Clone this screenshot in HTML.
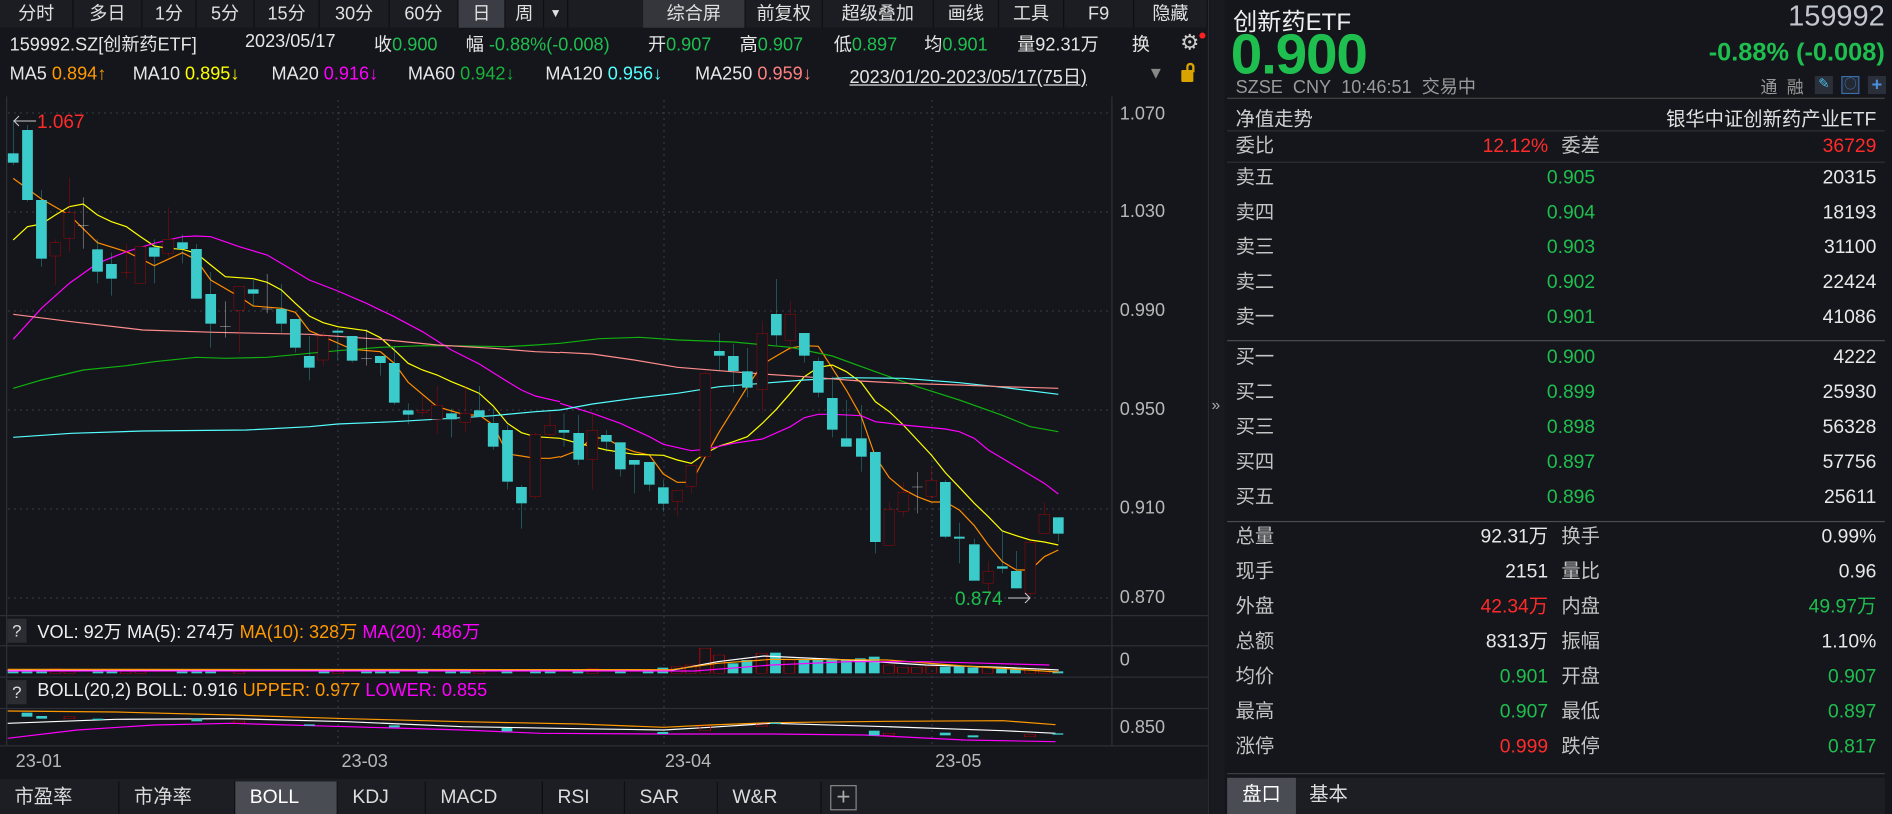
<!DOCTYPE html>
<html><head><meta charset="utf-8">
<style>
*{margin:0;padding:0;box-sizing:border-box}
html,body{width:1892px;height:814px;overflow:hidden;background:#14161b}
body{position:relative;font-family:"Liberation Sans","Noto Sans CJK SC",sans-serif;color:#d8d8d8}
#w{position:absolute;left:0;top:0;width:1568px;height:675px;transform:scale(1.20663,1.20593);transform-origin:0 0}
.a{position:absolute;white-space:nowrap}
.tb{position:absolute;top:0;height:23px;line-height:23px;text-align:center;font-size:15px;color:#e0e0e0;border-right:1px solid #0e0f12}
.g{color:#1fbf4f}.r{color:#ff2b2b}.o{color:#ff9900}.y{color:#ffff00}.m{color:#ff00ff}.c{color:#55ffff}.gg{color:#19b33a}.s{color:#ff8080}
.hl{position:absolute;height:1px;background:#2e3037}
.vl{position:absolute;width:1px;background:#2e3037}
.ax{position:absolute;left:928px;font-size:15px;color:#b8b8b8}
.bt{position:absolute;top:648px;height:27px;line-height:27px;font-size:16px;color:#dcdcdc;padding-left:12px;border-right:1px solid #0e0f12}
.rw{position:absolute;left:1015px;width:545px;height:29px;line-height:29px;font-size:16px}
.rw .l{position:absolute;left:9px;color:#c4c4c4}
.rw .v1{position:absolute;right:277px;text-align:right}
.rw .l2{position:absolute;left:279px;color:#c4c4c4}
.rw .p{position:absolute;right:238px;text-align:right}
.rw .v2{position:absolute;right:5px;text-align:right;color:#e8e8e8}
</style></head><body>
<div id="w">
<div class="a" style="left:0;top:0;width:1001px;height:23px;background:#1b1d22"></div>
<div class="tb" style="left:0;width:61px">分时</div>
<div class="tb" style="left:61px;width:57px">多日</div>
<div class="tb" style="left:118px;width:45px">1分</div>
<div class="tb" style="left:163px;width:48px">5分</div>
<div class="tb" style="left:211px;width:54px">15分</div>
<div class="tb" style="left:265px;width:58px">30分</div>
<div class="tb" style="left:323px;width:57px">60分</div>
<div class="tb" style="left:380px;width:39px;background:#3b3d44">日</div>
<div class="tb" style="left:419px;width:32px">周</div>
<div class="tb" style="left:451px;width:20px;font-size:10px">▼</div>
<div class="tb" style="left:533px;width:85px;background:#34363c">综合屏</div>
<div class="tb" style="left:618px;width:64px">前复权</div>
<div class="tb" style="left:682px;width:92px">超级叠加</div>
<div class="tb" style="left:774px;width:54px">画线</div>
<div class="tb" style="left:828px;width:54px">工具</div>
<div class="tb" style="left:882px;width:58px">F9</div>
<div class="tb" style="left:940px;width:61px">隐藏</div>
<div class="a" style="top:26px;font-size:15px;left:8px;color:#e6e6e6">159992.SZ[创新药ETF]</div>
<div class="a" style="top:26px;font-size:15px;left:203px;color:#e6e6e6">2023/05/17</div>
<div class="a" style="top:26px;font-size:15px;left:310px;color:#e6e6e6">收<span class="g">0.900</span></div>
<div class="a" style="top:26px;font-size:15px;left:386px;color:#e6e6e6">幅 <span class="g">-0.88%(-0.008)</span></div>
<div class="a" style="top:26px;font-size:15px;left:537px;color:#e6e6e6">开<span class="g">0.907</span></div>
<div class="a" style="top:26px;font-size:15px;left:613px;color:#e6e6e6">高<span class="g">0.907</span></div>
<div class="a" style="top:26px;font-size:15px;left:691px;color:#e6e6e6">低<span class="g">0.897</span></div>
<div class="a" style="top:26px;font-size:15px;left:766px;color:#e6e6e6">均<span class="g">0.901</span></div>
<div class="a" style="top:26px;font-size:15px;left:843px;color:#e6e6e6">量92.31万</div>
<div class="a" style="top:26px;font-size:15px;left:938px;color:#e6e6e6">换</div>
<div class="a" style="top:25px;font-size:18px;left:978px;color:#ccc">⚙</div>
<div class="a" style="top:27px;left:994px;width:5px;height:5px;border-radius:3px;background:#ff2020"></div>
<div class="a" style="top:53px;font-size:15px;left:8px;color:#e6e6e6">MA5 <span class="o">0.894↑</span></div>
<div class="a" style="top:53px;font-size:15px;left:110px;color:#e6e6e6">MA10 <span class="y">0.895↓</span></div>
<div class="a" style="top:53px;font-size:15px;left:225px;color:#e6e6e6">MA20 <span class="m">0.916↓</span></div>
<div class="a" style="top:53px;font-size:15px;left:338px;color:#e6e6e6">MA60 <span class="gg">0.942↓</span></div>
<div class="a" style="top:53px;font-size:15px;left:452px;color:#e6e6e6">MA120 <span class="c">0.956↓</span></div>
<div class="a" style="top:53px;font-size:15px;left:576px;color:#e6e6e6">MA250 <span class="s">0.959↓</span></div>
<div class="a" style="top:53px;font-size:15px;left:704px;color:#e6e6e6;text-decoration:underline">2023/01/20-2023/05/17(75日)</div>
<div class="a" style="top:52px;font-size:14px;left:951px;color:#888">▼</div>
<div class="a" style="top:58px;left:979px;width:10px;height:10px;background:#d9a400;border-radius:1px"></div>
<div class="a" style="top:52px;left:983px;width:7px;height:8px;border:2px solid #d9a400;border-bottom:none;border-radius:4px 4px 0 0"></div>
<div class="vl" style="left:5px;top:80px;height:538px"></div>
<div class="vl" style="left:921px;top:80px;height:538px"></div>
<div class="vl" style="left:1001px;top:0;height:675px;background:#2a2c32"></div>
<div class="hl" style="left:0;top:510px;width:1001px"></div>
<div class="hl" style="left:0;top:535px;width:1001px"></div>
<div class="hl" style="left:0;top:561px;width:1001px"></div>
<div class="hl" style="left:0;top:587px;width:1001px"></div>
<div class="hl" style="left:0;top:618px;width:1001px"></div>
<div class="ax" style="top:86px">1.070</div>
<div class="ax" style="top:167px">1.030</div>
<div class="ax" style="top:249px">0.990</div>
<div class="ax" style="top:331px">0.950</div>
<div class="ax" style="top:413px">0.910</div>
<div class="ax" style="top:487px">0.870</div>
<div class="ax" style="top:539px">0</div>
<div class="ax" style="top:595px">0.850</div>
<div class="a" style="left:6px;top:513px;width:16px;height:20px;background:#2b2d33;font-size:14px;line-height:20px;text-align:center;color:#ddd">?</div>
<div class="a" style="left:31px;top:513px;font-size:15px;color:#eee">VOL: 92万 MA(5): 274万 <span class="o">MA(10): 328万</span> <span class="m">MA(20): 486万</span></div>
<div class="a" style="left:6px;top:564px;width:16px;height:20px;background:#2b2d33;font-size:14px;line-height:20px;text-align:center;color:#ddd">?</div>
<div class="a" style="left:31px;top:564px;font-size:15px;color:#eee">BOLL(20,2) BOLL: 0.916 <span class="o">UPPER: 0.977</span> <span class="m">LOWER: 0.855</span></div>
<div class="a" style="left:13px;top:623px;font-size:15px;color:#b8b8b8">23-01</div>
<div class="a" style="left:283px;top:623px;font-size:15px;color:#b8b8b8">23-03</div>
<div class="a" style="left:551px;top:623px;font-size:15px;color:#b8b8b8">23-04</div>
<div class="a" style="left:775px;top:623px;font-size:15px;color:#b8b8b8">23-05</div>
<div class="a" style="left:0;top:646px;width:1001px;height:29px;background:#1c1e23"></div>
<div class="bt" style="left:0;width:99px">市盈率</div>
<div class="bt" style="left:99px;width:96px">市净率</div>
<div class="bt" style="left:195px;width:85px;background:#4a4c54;color:#fff">BOLL</div>
<div class="bt" style="left:280px;width:73px">KDJ</div>
<div class="bt" style="left:353px;width:97px">MACD</div>
<div class="bt" style="left:450px;width:68px">RSI</div>
<div class="bt" style="left:518px;width:77px">SAR</div>
<div class="bt" style="left:595px;width:86px">W&amp;R</div>
<div class="a" style="left:688px;top:651px;width:22px;height:21px;border:1px solid #888;color:#aaa;text-align:center;line-height:18px;font-size:20px">+</div>

<div class="a" style="left:1003px;top:0;width:12px;height:675px;background:#181a1f"></div>
<div class="a" style="left:1004px;top:328px;font-size:13px;color:#aaa">»</div>
<div class="a" style="left:1022px;top:2px;font-size:20px;color:#eee">创新药ETF</div>
<div class="a" style="right:6px;top:0px;font-size:24px;color:#c2c6ce">159992</div>
<div class="a g" style="left:1020px;top:17px;font-size:47px;font-weight:bold;letter-spacing:-1px">0.900</div>
<div class="a g" style="right:6px;top:32px;font-size:21px;font-weight:bold">-0.88% (-0.008)</div>
<div class="a" style="left:1024px;top:61px;font-size:15px;color:#9a9a9a">SZSE&nbsp; CNY&nbsp; 10:46:51&nbsp; 交易中</div>
<div class="a" style="left:1459px;top:62px;font-size:14px;color:#9a9a9a">通&nbsp; 融</div>
<div class="a" style="left:1504px;top:63px;width:15px;height:15px;background:#2a2f3a;color:#4bc0e8;font-size:11px;text-align:center;line-height:15px">✎</div>
<div class="a" style="left:1526px;top:63px;width:15px;height:15px;background:#232833;border:1px solid #3b6ea8;color:#4b8fe0;font-size:10px;text-align:center;line-height:13px">◯</div>
<div class="a" style="left:1548px;top:63px;width:15px;height:15px;background:#2a2f3a;color:#4b8fe0;font-size:15px;font-weight:bold;text-align:center;line-height:15px">+</div>
<div class="hl" style="left:1017px;top:81px;width:545px;background:#444"></div>
<div class="a" style="left:1024px;top:85px;font-size:16px;color:#d0d0d0">净值走势</div>
<div class="a" style="right:13px;top:85px;font-size:16px;color:#e0e0e0">银华中证创新药产业ETF</div>
<div class="hl" style="left:1017px;top:108px;width:545px"></div>
<div class="rw" style="top:107px"><span class="l">委比</span><span class="v1 r">12.12%</span><span class="l2">委差</span><span class="v2" style="color:#ff2b2b">36729</span></div>
<div class="hl" style="left:1017px;top:134px;width:545px"></div>
<div class="rw" style="top:133px"><span class="l">卖五</span><span class="p g">0.905</span><span class="v2">20315</span></div>
<div class="rw" style="top:162px"><span class="l">卖四</span><span class="p g">0.904</span><span class="v2">18193</span></div>
<div class="rw" style="top:191px"><span class="l">卖三</span><span class="p g">0.903</span><span class="v2">31100</span></div>
<div class="rw" style="top:220px"><span class="l">卖二</span><span class="p g">0.902</span><span class="v2">22424</span></div>
<div class="rw" style="top:249px"><span class="l">卖一</span><span class="p g">0.901</span><span class="v2">41086</span></div>
<div class="hl" style="left:1017px;top:282px;width:545px;background:#4a4c52"></div>
<div class="rw" style="top:282px"><span class="l">买一</span><span class="p g">0.900</span><span class="v2">4222</span></div>
<div class="rw" style="top:311px"><span class="l">买二</span><span class="p g">0.899</span><span class="v2">25930</span></div>
<div class="rw" style="top:340px"><span class="l">买三</span><span class="p g">0.898</span><span class="v2">56328</span></div>
<div class="rw" style="top:369px"><span class="l">买四</span><span class="p g">0.897</span><span class="v2">57756</span></div>
<div class="rw" style="top:398px"><span class="l">买五</span><span class="p g">0.896</span><span class="v2">25611</span></div>
<div class="hl" style="left:1017px;top:432px;width:545px;background:#4a4c52"></div>
<div class="rw" style="top:431px"><span class="l">总量</span><span class="v1" style="color:#e8e8e8">92.31万</span><span class="l2">换手</span><span class="v2">0.99%</span></div>
<div class="rw" style="top:460px"><span class="l">现手</span><span class="v1" style="color:#e8e8e8">2151</span><span class="l2">量比</span><span class="v2">0.96</span></div>
<div class="rw" style="top:489px"><span class="l">外盘</span><span class="v1 r">42.34万</span><span class="l2">内盘</span><span class="v2" style="color:#1fbf4f">49.97万</span></div>
<div class="rw" style="top:518px"><span class="l">总额</span><span class="v1" style="color:#e8e8e8">8313万</span><span class="l2">振幅</span><span class="v2">1.10%</span></div>
<div class="rw" style="top:547px"><span class="l">均价</span><span class="v1 g">0.901</span><span class="l2">开盘</span><span class="v2" style="color:#1fbf4f">0.907</span></div>
<div class="rw" style="top:576px"><span class="l">最高</span><span class="v1 g">0.907</span><span class="l2">最低</span><span class="v2" style="color:#1fbf4f">0.897</span></div>
<div class="rw" style="top:605px"><span class="l">涨停</span><span class="v1 r">0.999</span><span class="l2">跌停</span><span class="v2" style="color:#1fbf4f">0.817</span></div>
<div class="hl" style="left:1017px;top:641px;width:545px;background:#3a3c42"></div>
<div class="a" style="left:1017px;top:645px;width:545px;height:30px;background:#1c1e23"></div>
<div class="a" style="left:1017px;top:645px;width:57px;height:30px;background:#4a4c54;color:#fff;font-size:16px;line-height:30px;text-align:center">盘口</div>
<div class="a" style="left:1085px;top:645px;font-size:16px;line-height:30px;color:#ddd">基本</div>
</div>

<svg style="position:absolute;left:0;top:0" width="1892" height="814" viewBox="0 0 1892 814">
<style>
.gr{stroke:#3a3d44;stroke-width:1;stroke-dasharray:2 4}
.w{stroke-width:1;vector-effect:non-scaling-stroke}
.tw{stroke:#3bcbcb}
.rr{stroke:#dd0000}
.wt{stroke:#ffffff}
.t{fill:#3bcbcb}
.rb{fill:#14161b;stroke:#dd0000;stroke-width:1;vector-effect:non-scaling-stroke}
.rv{fill:none;stroke:#dd0000;stroke-width:1;vector-effect:non-scaling-stroke}
.ln{fill:none;stroke-width:1.2;vector-effect:non-scaling-stroke}
</style>
<g class="gr">
<line x1="8" y1="113" x2="1110" y2="113"/><line x1="8" y1="212" x2="1110" y2="212"/>
<line x1="8" y1="311" x2="1110" y2="311"/><line x1="8" y1="410" x2="1110" y2="410"/>
<line x1="8" y1="509" x2="1110" y2="509"/><line x1="8" y1="598" x2="1110" y2="598"/>
<line x1="338" y1="100" x2="338" y2="745"/><line x1="664" y1="100" x2="664" y2="745"/><line x1="932" y1="100" x2="932" y2="745"/>
</g>
<g transform="translate(0,100) scale(0.35714,0.33333)">
<polyline class="ln" stroke="#ff8c00" points="37,235 116,297 194,345 273,428 354,455 432,497 511,458 550,480 590,540 670,590 709,618 788,625 827,637 866,692 905,710 986,748 1065,755 1104,790 1143,847 1224,920 1303,945 1342,945 1381,975 1421,1062 1460,1068 1499,1075 1540,1075 1568,1070"/>
<polyline class="ln" stroke="#ffff00" points="37,420 77,380 116,372 155,345 194,320 233,312 273,345 312,365 354,380 393,410 432,438 471,445 511,448 550,460 590,495 631,530 709,536 748,547 788,570 827,610 866,648 905,668 946,680 1026,692 1065,713 1104,750 1143,790 1183,810 1224,825 1264,845 1303,862 1342,880 1381,918 1421,970 1460,998 1499,1010 1568,1015"/>
<polyline class="ln" stroke="#ff00ff" points="37,718 116,625 194,550 273,490 354,455 432,430 511,410 550,408 590,410 670,440 748,465 827,515 866,540 946,573 1026,610 1104,650 1183,695 1264,750 1342,792 1421,845 1460,870 1499,888 1568,905"/>
<polyline class="ln" stroke="#10b010" points="37,865 116,840 233,810 354,797 432,785 550,772 631,775 748,772 866,760 946,752 1065,742 1183,737 1303,738 1421,740 1499,735 1568,730"/>
<polyline class="ln" stroke="#55ffff" points="37,1012 200,1000 400,993 690,990 866,980 946,972 1104,965 1264,955 1381,947 1499,935 1568,930"/>
<polyline class="ln" stroke="#ff8c8c" points="37,643 200,665 400,690 600,697 866,703 1065,718 1224,735 1381,745 1499,755 1568,758"/>
</g>
<g transform="translate(560,250) scale(0.33333)">
<polyline class="ln" stroke="#ff8c00" points="0,622 56,600 97,563 139,565 181,590 223,605 268,615 310,672 352,697 394,697 436,620 478,545 520,478 562,410 607,343 649,318 691,294 733,287 775,289 817,355 859,420 904,500 946,620 988,683 1030,718 1072,740 1114,756 1156,756 1198,780 1243,827 1285,885 1327,935 1369,960 1411,960 1453,920 1495,900"/>
<polyline class="ln" stroke="#ffff00" points="0,565 56,580 139,600 223,613 310,616 352,630 394,640 436,610 478,588 520,575 562,560 607,520 649,478 691,430 733,380 775,352 817,345 859,365 904,398 946,455 988,485 1030,525 1072,570 1114,615 1156,668 1198,712 1243,760 1285,800 1327,843 1369,857 1411,870 1453,876 1495,885"/>
<polyline class="ln" stroke="#ff00ff" points="0,460 97,490 181,520 268,560 310,583 394,602 436,598 520,580 607,567 691,530 733,503 775,493 817,493 904,497 946,515 1030,525 1156,537 1198,545 1243,565 1285,600 1369,650 1453,700 1495,732"/>
<polyline class="ln" stroke="#10b010" points="0,280 118,266 238,262 355,270 520,276 691,292 817,318 946,365 1072,410 1198,450 1327,496 1411,530 1495,545"/>
<polyline class="ln" stroke="#55ffff" points="0,480 97,462 223,445 352,430 478,410 607,400 733,390 859,383 1030,385 1198,398 1327,412 1495,433"/>
<polyline class="ln" stroke="#ff8c8c" points="0,307 97,312 223,330 352,352 478,362 607,372 733,380 900,393 1030,400 1198,405 1327,410 1495,415"/>
</g>
<g transform="translate(0,100) scale(0.35714,0.33333)">
<g class="w tw">
<line x1="37" y1="60" x2="37" y2="195"/><line x1="77" y1="75" x2="77" y2="305"/><line x1="116" y1="270" x2="116" y2="500"/>
<line x1="273" y1="418" x2="273" y2="550"/><line x1="312" y1="458" x2="312" y2="587"/><line x1="432" y1="418" x2="432" y2="550"/>
<line x1="511" y1="403" x2="511" y2="490"/><line x1="550" y1="432" x2="550" y2="596"/><line x1="590" y1="516" x2="590" y2="743"/>
<line x1="709" y1="540" x2="709" y2="617"/><line x1="788" y1="552" x2="788" y2="698"/><line x1="827" y1="657" x2="827" y2="758"/>
<line x1="866" y1="708" x2="866" y2="841"/><line x1="946" y1="688" x2="946" y2="782"/><line x1="986" y1="708" x2="986" y2="788"/>
<line x1="1065" y1="768" x2="1065" y2="827"/><line x1="1104" y1="738" x2="1104" y2="914"/><line x1="1143" y1="910" x2="1143" y2="973"/>
<line x1="1264" y1="926" x2="1264" y2="1012"/><line x1="1342" y1="858" x2="1342" y2="951"/><line x1="1381" y1="925" x2="1381" y2="1049"/>
<line x1="1421" y1="975" x2="1421" y2="1168"/><line x1="1460" y1="1155" x2="1460" y2="1286"/>
</g>
<g class="w rr">
<line x1="155" y1="418" x2="155" y2="556"/><line x1="194" y1="232" x2="194" y2="455"/><line x1="354" y1="432" x2="354" y2="536"/>
<line x1="339" y1="518" x2="369" y2="518"/><line x1="393" y1="440" x2="393" y2="550"/><line x1="471" y1="322" x2="471" y2="470"/>
<line x1="670" y1="559" x2="670" y2="758"/><line x1="905" y1="694" x2="905" y2="797"/><line x1="1183" y1="886" x2="1183" y2="950"/>
<line x1="1224" y1="858" x2="1224" y2="1003"/><line x1="1303" y1="858" x2="1303" y2="997"/><line x1="1499" y1="998" x2="1499" y2="1196"/>
<line x1="1540" y1="940" x2="1540" y2="1018"/>
</g>
<g class="w wt">
<line x1="233" y1="292" x2="233" y2="446"/><line x1="218" y1="376" x2="248" y2="376"/>
<line x1="631" y1="604" x2="631" y2="713"/><line x1="616" y1="679" x2="646" y2="679"/>
<line x1="748" y1="522" x2="748" y2="640"/><line x1="733" y1="627" x2="763" y2="627"/>
<line x1="1026" y1="688" x2="1026" y2="797"/><line x1="1011" y1="775" x2="1041" y2="775"/>
</g>
<g class="t">
<rect x="22" y="160" width="30" height="28"/><rect x="62" y="90" width="30" height="210"/><rect x="101" y="300" width="30" height="176"/>
<rect x="258" y="448" width="30" height="67"/><rect x="297" y="492" width="30" height="44"/><rect x="417" y="442" width="30" height="28"/>
<rect x="496" y="427" width="30" height="20"/><rect x="535" y="447" width="30" height="149"/><rect x="575" y="582" width="30" height="89"/>
<rect x="694" y="568" width="30" height="13"/><rect x="773" y="627" width="30" height="44"/><rect x="812" y="657" width="30" height="86"/>
<rect x="851" y="768" width="30" height="35"/><rect x="931" y="692" width="30" height="6"/><rect x="971" y="708" width="30" height="74"/>
<rect x="1050" y="768" width="30" height="21"/><rect x="1089" y="789" width="30" height="119"/><rect x="1128" y="931" width="30" height="13"/>
<rect x="1249" y="940" width="30" height="18"/><rect x="1327" y="931" width="30" height="20"/><rect x="1366" y="969" width="30" height="71"/>
<rect x="1406" y="990" width="30" height="155"/><rect x="1445" y="1161" width="30" height="49"/>
</g>
<g class="rb">
<rect x="140" y="428" width="30" height="40"/><rect x="179" y="338" width="30" height="77"/><rect x="378" y="440" width="30" height="110"/>
<rect x="456" y="418" width="30" height="42"/><rect x="655" y="559" width="30" height="72"/><rect x="890" y="708" width="30" height="72"/>
<rect x="1168" y="931" width="30" height="6"/><rect x="1209" y="916" width="30" height="42"/><rect x="1288" y="940" width="30" height="27"/>
<rect x="1484" y="1003" width="30" height="187"/><rect x="1525" y="976" width="30" height="27"/>
</g>
</g>
<g transform="translate(560,250) scale(0.33333)">
<g class="w tw">
<line x1="12" y1="490" x2="12" y2="590"/><line x1="56" y1="495" x2="56" y2="645"/><line x1="139" y1="540" x2="139" y2="605"/>
<line x1="181" y1="577" x2="181" y2="680"/><line x1="223" y1="630" x2="223" y2="730"/><line x1="268" y1="636" x2="268" y2="724"/>
<line x1="310" y1="690" x2="310" y2="785"/><line x1="478" y1="249" x2="478" y2="362"/><line x1="520" y1="282" x2="520" y2="428"/>
<line x1="562" y1="294" x2="562" y2="442"/><line x1="649" y1="87" x2="649" y2="286"/><line x1="733" y1="249" x2="733" y2="338"/>
<line x1="775" y1="323" x2="775" y2="442"/><line x1="817" y1="380" x2="817" y2="562"/><line x1="859" y1="450" x2="859" y2="590"/>
<line x1="904" y1="465" x2="904" y2="665"/><line x1="946" y1="606" x2="946" y2="910"/><line x1="1156" y1="690" x2="1156" y2="866"/>
<line x1="1198" y1="818" x2="1198" y2="940"/><line x1="1243" y1="866" x2="1243" y2="992"/><line x1="1327" y1="840" x2="1327" y2="970"/>
<line x1="1369" y1="903" x2="1369" y2="1015"/><line x1="1495" y1="802" x2="1495" y2="875"/>
</g>
<g class="w rr">
<line x1="97" y1="492" x2="97" y2="718"/><line x1="352" y1="721" x2="352" y2="800"/><line x1="394" y1="646" x2="394" y2="730"/>
<line x1="436" y1="365" x2="436" y2="620"/><line x1="607" y1="213" x2="607" y2="488"/><line x1="691" y1="153" x2="691" y2="306"/>
<line x1="988" y1="755" x2="988" y2="886"/><line x1="1030" y1="697" x2="1030" y2="800"/><line x1="1114" y1="651" x2="1114" y2="745"/>
<line x1="1285" y1="933" x2="1285" y2="1030"/><line x1="1411" y1="871" x2="1411" y2="1040"/><line x1="1453" y1="757" x2="1453" y2="850"/>
</g>
<g class="w wt"><line x1="1072" y1="666" x2="1072" y2="790"/><line x1="1056" y1="711" x2="1088" y2="711"/></g>
<g class="t">
<rect x="-4" y="540" width="32" height="8"/><rect x="40" y="549" width="32" height="80"/><rect x="123" y="555" width="32" height="20"/>
<rect x="165" y="577" width="32" height="81"/><rect x="207" y="630" width="32" height="14"/><rect x="252" y="636" width="32" height="68"/>
<rect x="294" y="712" width="32" height="49"/><rect x="462" y="303" width="32" height="14"/><rect x="504" y="318" width="32" height="45"/>
<rect x="546" y="364" width="32" height="49"/><rect x="633" y="192" width="32" height="64"/><rect x="717" y="249" width="32" height="68"/>
<rect x="759" y="333" width="32" height="95"/><rect x="801" y="444" width="32" height="95"/><rect x="843" y="565" width="32" height="25"/>
<rect x="888" y="565" width="32" height="55"/><rect x="930" y="606" width="32" height="270"/><rect x="1140" y="696" width="32" height="164"/>
<rect x="1182" y="860" width="32" height="6"/><rect x="1227" y="883" width="32" height="109"/><rect x="1311" y="949" width="32" height="7"/>
<rect x="1353" y="963" width="32" height="52"/><rect x="1479" y="802" width="32" height="49"/>
</g>
<g class="rb">
<rect x="81" y="541" width="32" height="87"/><rect x="336" y="721" width="32" height="33"/><rect x="378" y="646" width="32" height="63"/>
<rect x="420" y="370" width="32" height="250"/><rect x="591" y="250" width="32" height="168"/><rect x="675" y="193" width="32" height="78"/>
<rect x="972" y="778" width="32" height="108"/><rect x="1014" y="727" width="32" height="57"/><rect x="1098" y="691" width="32" height="48"/>
<rect x="1269" y="965" width="32" height="35"/><rect x="1395" y="877" width="32" height="153"/><rect x="1437" y="793" width="32" height="57"/>
</g>
</g>
<line x1="14" y1="121" x2="36" y2="121" stroke="#ccc" stroke-width="1"/>
<polyline points="19,116 14,121 19,126" fill="none" stroke="#ccc" stroke-width="1"/>
<text x="37" y="128" font-family="Liberation Sans,sans-serif" font-size="19" fill="#ff2b2b">1.067</text>
<text x="955" y="605" font-family="Liberation Sans,sans-serif" font-size="19" fill="#1fbf4f">0.874</text>
<line x1="1008" y1="598" x2="1030" y2="598" stroke="#ccc" stroke-width="1"/>
<polyline points="1025,593 1030,598 1025,603" fill="none" stroke="#ccc" stroke-width="1"/>
<g transform="translate(0,610) scale(0.7716,0.33333)">
<g class="t">
<rect x="10" y="180" width="14" height="10"/><rect x="28" y="178" width="14" height="12"/><rect x="47" y="180" width="14" height="10"/>
<rect x="120" y="181" width="14" height="9"/><rect x="138" y="180" width="14" height="10"/><rect x="229" y="181" width="14" height="9"/>
<rect x="248" y="178" width="14" height="12"/><rect x="266" y="180" width="14" height="10"/><rect x="413" y="181" width="14" height="9"/>
<rect x="468" y="182" width="14" height="8"/><rect x="486" y="182" width="14" height="8"/><rect x="504" y="181" width="14" height="9"/>
<rect x="541" y="182" width="14" height="8"/><rect x="577" y="182" width="14" height="8"/><rect x="596" y="182" width="14" height="8"/>
<rect x="650" y="178" width="14" height="12"/><rect x="687" y="181" width="14" height="9"/><rect x="706" y="182" width="14" height="8"/>
<rect x="742" y="181" width="14" height="9"/><rect x="797" y="181" width="14" height="9"/><rect x="833" y="178" width="14" height="12"/>
<rect x="852" y="173" width="14" height="17"/><rect x="943" y="160" width="14" height="30"/><rect x="961" y="150" width="14" height="40"/>
<rect x="998" y="128" width="14" height="62"/><rect x="1035" y="150" width="14" height="40"/><rect x="1053" y="150" width="14" height="40"/>
<rect x="1071" y="150" width="14" height="40"/><rect x="1090" y="150" width="14" height="40"/><rect x="1108" y="145" width="14" height="45"/>
<rect x="1126" y="140" width="14" height="50"/><rect x="1218" y="170" width="14" height="20"/><rect x="1236" y="170" width="14" height="20"/>
<rect x="1254" y="172" width="14" height="18"/><rect x="1291" y="176" width="14" height="14"/><rect x="1309" y="176" width="14" height="14"/>
<rect x="1364" y="184" width="14" height="6"/>
</g>
<g class="rv">
<rect x="65" y="176" width="14" height="14"/><rect x="83" y="179" width="14" height="11"/><rect x="156" y="181" width="14" height="9"/>
<rect x="175" y="181" width="14" height="9"/><rect x="303" y="178" width="14" height="12"/><rect x="431" y="178" width="14" height="12"/>
<rect x="614" y="181" width="14" height="9"/><rect x="761" y="176" width="14" height="14"/><rect x="870" y="170" width="14" height="20"/>
<rect x="888" y="165" width="14" height="25"/><rect x="907" y="115" width="14" height="75"/><rect x="925" y="135" width="14" height="55"/>
<rect x="980" y="130" width="14" height="60"/><rect x="1016" y="150" width="14" height="40"/><rect x="1145" y="165" width="14" height="25"/>
<rect x="1163" y="172" width="14" height="18"/><rect x="1181" y="172" width="14" height="18"/><rect x="1200" y="170" width="14" height="20"/>
<rect x="1273" y="172" width="14" height="18"/><rect x="1328" y="176" width="14" height="14"/><rect x="1346" y="176" width="14" height="14"/>
</g>
<polyline class="ln" stroke="#ffffff" points="10,181 870,181 930,155 990,138 1100,150 1200,165 1300,172 1372,180"/>
<polyline class="ln" stroke="#ff9900" points="10,178 870,179 930,160 1000,148 1150,150 1250,168 1372,186"/>
<polyline class="ln" stroke="#ff00ff" points="10,183 900,183 1000,165 1100,155 1200,155 1280,160 1360,165"/>
<polyline class="ln" stroke="#ff9900" points="10,303 150,306 300,315 450,326 600,335 750,342 860,352 920,345 1000,338 1150,334 1300,332 1368,344"/>
<polyline class="ln" stroke="#ffffff" points="10,340 150,328 300,326 450,335 600,350 750,356 860,360 920,352 1000,340 1150,350 1300,362 1368,370"/>
<polyline class="ln" stroke="#ff00ff" points="10,385 100,360 200,345 300,340 450,350 600,360 700,370 860,372 1000,372 1120,375 1250,390 1368,395"/>
<g class="t">
<rect x="28" y="308" width="14" height="12"/><rect x="47" y="318" width="14" height="8"/><rect x="120" y="326" width="14" height="4"/>
<rect x="248" y="326" width="14" height="8"/><rect x="394" y="343" width="14" height="4"/><rect x="504" y="346" width="14" height="6"/>
<rect x="650" y="354" width="14" height="10"/><rect x="852" y="366" width="14" height="6"/><rect x="998" y="338" width="14" height="4"/>
<rect x="1126" y="362" width="14" height="14"/><rect x="1218" y="368" width="14" height="8"/><rect x="1254" y="376" width="14" height="6"/>
<rect x="1364" y="370" width="14" height="4"/>
</g>
<g class="rv">
<rect x="83" y="320" width="14" height="6"/><rect x="303" y="333" width="14" height="6"/><rect x="907" y="348" width="14" height="14"/>
<rect x="980" y="342" width="14" height="8"/><rect x="1145" y="370" width="14" height="6"/><rect x="1328" y="374" width="14" height="6"/>
</g>
</g>
</svg>
</body></html>
